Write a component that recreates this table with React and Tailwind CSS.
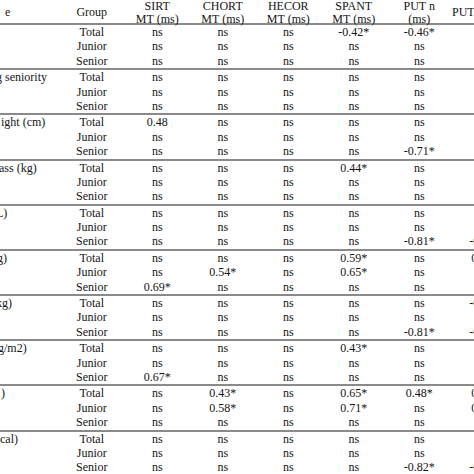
import React from 'react';

// Correlation table (cropped view) — columns past the 7th are cut by the frame
const headers = [
  ['SIRT', 'MT (ms)'],
  ['CHORT', 'MT (ms)'],
  ['HECOR', 'MT (ms)'],
  ['SPANT', 'MT (ms)'],
  ['PUT n', '(ms)'],
];

const groups = [
  { label: '', cls: '', rows: [['ns', 'ns', 'ns', '-0.42*', '-0.46*', 'ns'], ['ns', 'ns', 'ns', 'ns', 'ns', 'ns'], ['ns', 'ns', 'ns', 'ns', 'ns', 'ns']] },
  { label: 'g seniority', cls: '-ml-[4px]', rows: [['ns', 'ns', 'ns', 'ns', 'ns', 'ns'], ['ns', 'ns', 'ns', 'ns', 'ns', 'ns'], ['ns', 'ns', 'ns', 'ns', 'ns', 'ns']] },
  { label: 'ight (cm)', cls: 'ml-[1px]', rows: [['0.48', 'ns', 'ns', 'ns', 'ns', 'ns'], ['ns', 'ns', 'ns', 'ns', 'ns', 'ns'], ['ns', 'ns', 'ns', 'ns', '-0.71*', 'ns']] },
  { label: 'ass (kg)', cls: '-ml-[1px]', rows: [['ns', 'ns', 'ns', '0.44*', 'ns', 'ns'], ['ns', 'ns', 'ns', 'ns', 'ns', 'ns'], ['ns', 'ns', 'ns', 'ns', 'ns', 'ns']] },
  { label: 'L)', cls: '-ml-[4px]', rows: [['ns', 'ns', 'ns', 'ns', 'ns', 'ns'], ['ns', 'ns', 'ns', 'ns', 'ns', 'ns'], ['ns', 'ns', 'ns', 'ns', '-0.81*', '-0.62*']] },
  { label: 'g)', cls: '-ml-[3px]', rows: [['ns', 'ns', 'ns', '0.59*', 'ns', '0.52*'], ['ns', '0.54*', 'ns', '0.65*', 'ns', 'ns'], ['0.69*', 'ns', 'ns', 'ns', 'ns', 'ns']] },
  { label: 'kg)', cls: '-ml-[4px]', rows: [['ns', 'ns', 'ns', 'ns', 'ns', '-0.55*'], ['ns', 'ns', 'ns', 'ns', 'ns', 'ns'], ['ns', 'ns', 'ns', 'ns', '-0.81*', '-0.74*']] },
  { label: 'g/m2)', cls: '-ml-[2px]', rows: [['ns', 'ns', 'ns', '0.43*', 'ns', 'ns'], ['ns', 'ns', 'ns', 'ns', 'ns', 'ns'], ['0.67*', 'ns', 'ns', 'ns', 'ns', 'ns']] },
  { label: ')', cls: 'ml-[1px]', rows: [['ns', '0.43*', 'ns', '0.65*', '0.48*', '0.51*'], ['ns', '0.58*', 'ns', '0.71*', 'ns', '0.60*'], ['ns', 'ns', 'ns', 'ns', 'ns', 'ns']] },
  { label: 'cal)', cls: '', rows: [['ns', 'ns', 'ns', 'ns', 'ns', 'ns'], ['ns', 'ns', 'ns', 'ns', 'ns', 'ns'], ['ns', 'ns', 'ns', 'ns', '-0.82*', '-0.70*']] },
];

const rowNames = ['Total', 'Junior', 'Senior'];
const gridCols = 'grid grid-cols-[59px_repeat(7,65.5px)]';

export default function App() {
  return (
    <div className="w-[474px] h-[474px] overflow-hidden bg-white text-[#141414] text-[12px] font-['Liberation_Serif',serif]">
      {/* header */}
      <div className={`${gridCols} h-[23px] items-center leading-[12.7px] border-b-2 border-[#8a8a8a] box-content`}>
        <div className="pl-[5px] whitespace-nowrap">e</div>
        <div className="text-center">Group</div>
        {headers.map((h) => (
          <div key={h[0]} className="text-center whitespace-nowrap">
            <div>{h[0]}</div>
            <div>{h[1]}</div>
          </div>
        ))}
        <div className="text-center whitespace-nowrap">PUT MT (ms)</div>
      </div>

      {groups.map((g, gi) => (
        <div key={gi} className={gi > 0 ? 'border-t-2 border-[#8a8a8a]' : ''}>
          {g.rows.map((r, ri) => (
            <div key={ri} className={`${gridCols} h-[14.4px] items-center leading-[14.4px] whitespace-nowrap`}>
              <div className="overflow-hidden">
                {ri === 0 && <span className={`block ${g.cls}`}>{g.label}</span>}
              </div>
              <div className="text-center">{rowNames[ri]}</div>
              {r.map((v, vi) => (
                <div key={vi} className="text-center">{v}</div>
              ))}
            </div>
          ))}
        </div>
      ))}
    </div>
  );
}
